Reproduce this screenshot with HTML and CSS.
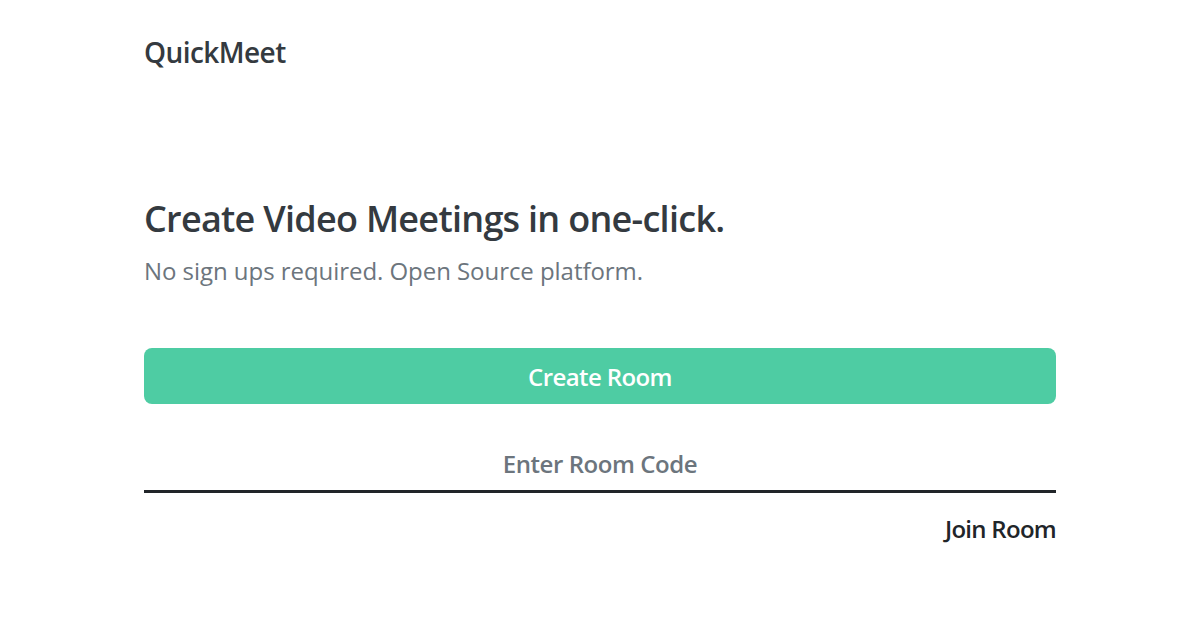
FILE: index.html
```html
<!DOCTYPE html>
<html lang="en">
<head>
<meta charset="utf-8">
<title>QuickMeet</title>
<link rel="stylesheet" href="styles.css">
</head>
<body>
<div class="container">
  <header class="header">
    <div class="logo">QuickMeet</div>
  </header>
  <main class="main">
    <h1 class="title">Create Video Meetings in one-click.</h1>
    <p class="subtitle">No sign ups required. Open Source platform.</p>
    <button class="btn-create">Create Room</button>
    <input class="code-input" type="text" placeholder="Enter Room Code">
    <div class="join-row">
      <button class="btn-join">Join Room</button>
    </div>
  </main>
</div>
</body>
</html>
```
FILE: styles.css
```css
* { box-sizing: border-box; }
html, body { margin: 0; padding: 0; background: #ffffff; }
body {
  font-family: "Open Sans", "Liberation Sans", sans-serif;
  color: #343a40;
}
.container {
  width: 912px;
  margin: 0 auto;
}
.header {
  padding-top: 33px;
  height: 195px;
}
.logo {
  font-size: 28px;
  font-weight: 600;
  letter-spacing: -0.02em;
  color: #343a40;
  line-height: 38px;
}
.main {
  display: flex;
  flex-direction: column;
}
.title {
  margin: 0;
  font-size: 36px;
  font-weight: 600;
  letter-spacing: -0.02em;
  color: #343a40;
  line-height: 48px;
}
.subtitle {
  margin: 12px 0 0 0;
  font-size: 24px;
  letter-spacing: -0.05px;
  color: #6c757d;
  line-height: 32px;
}
.btn-create {
  margin-top: 61px;
  height: 56px;
  border: none;
  border-radius: 8px;
  background: #4ecca3;
  color: #ffffff;
  font-family: inherit;
  font-size: 24px;
  font-weight: 600;
  letter-spacing: -0.025em;
  padding: 0;
}
.code-input {
  margin-top: 33px;
  height: 56px;
  border: none;
  border-bottom: 3px solid #212529;
  font-family: inherit;
  font-size: 24px;
  font-weight: 600;
  letter-spacing: -0.018em;
  text-align: center;
  color: #212529;
  outline: none;
  padding: 0;
  background: transparent;
}
.code-input::placeholder {
  color: #6c757d;
  opacity: 1;
}
.join-row {
  display: flex;
  justify-content: flex-end;
  margin-top: 20px;
}
.btn-join {
  border: none;
  background: none;
  padding: 0;
  font-family: inherit;
  font-size: 24px;
  font-weight: 600;
  letter-spacing: -0.03em;
  color: #212529;
  line-height: 32px;
}
```
